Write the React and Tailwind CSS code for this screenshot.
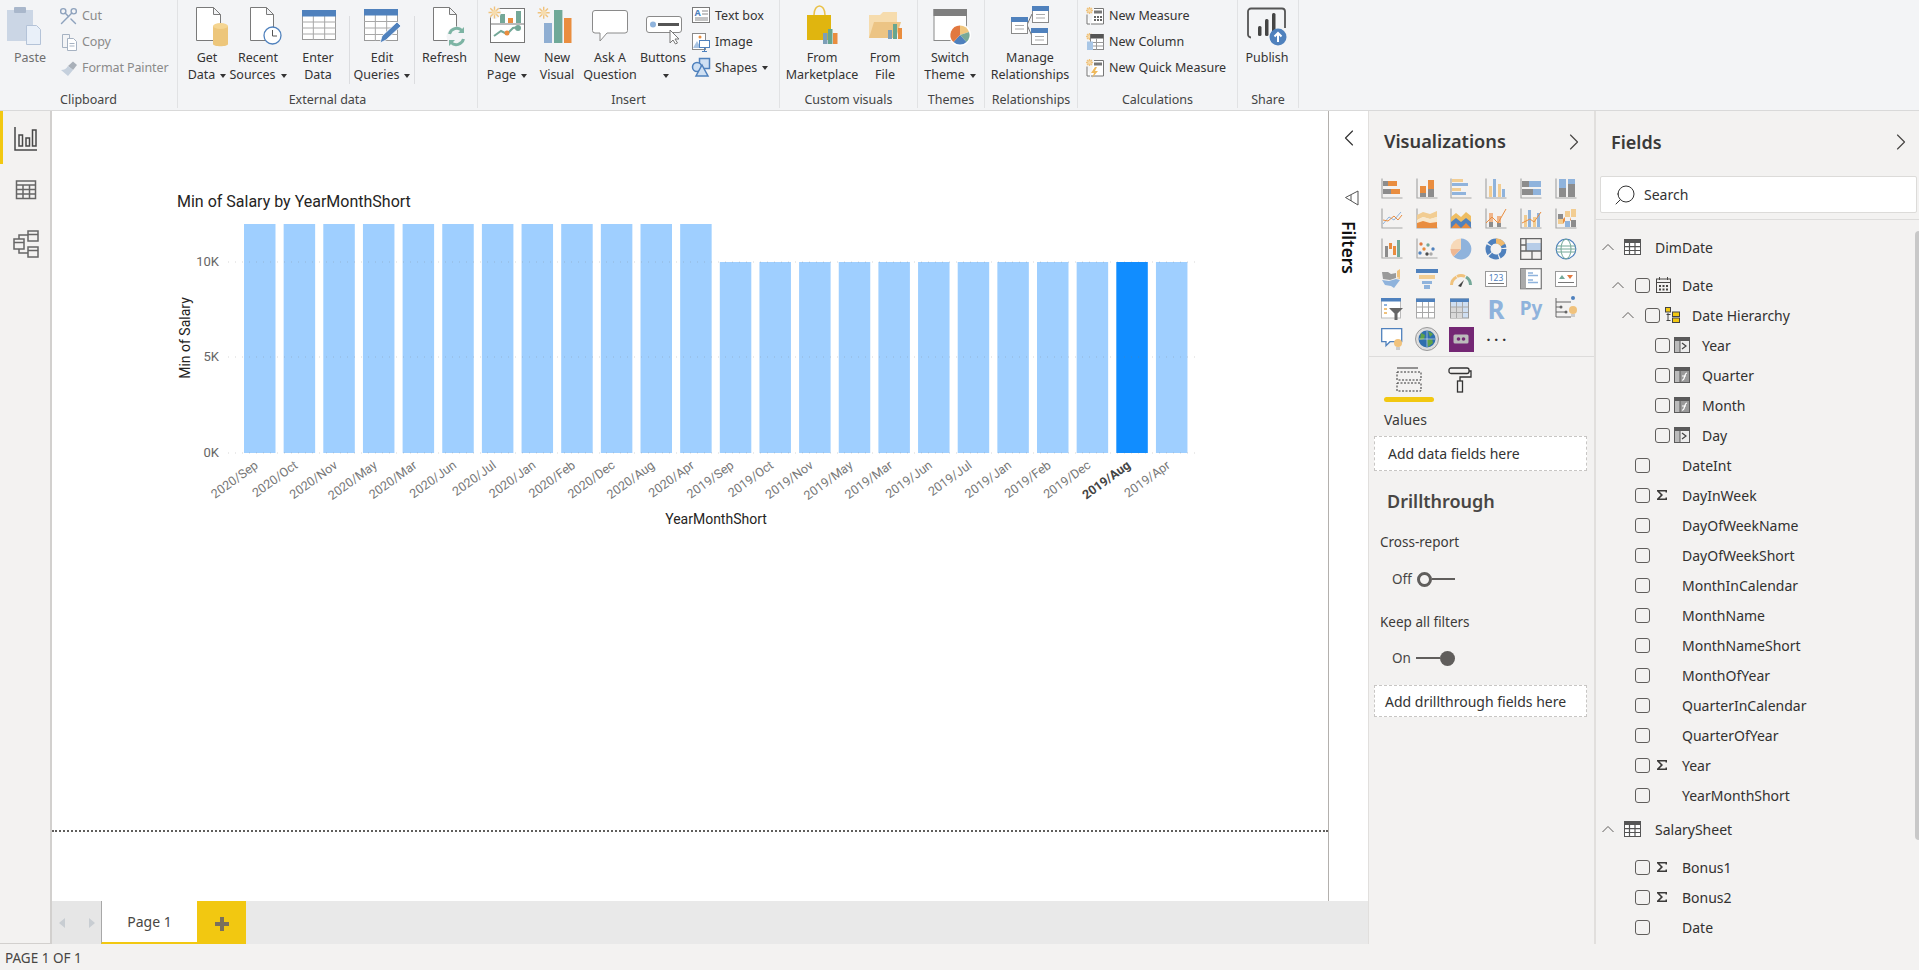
import React from 'react';
import { Scissors, ChevronLeft, ChevronRight, Search } from 'lucide-react';

const UI = "font-['Noto_Sans','Open_Sans',sans-serif]";

const O = '#e98d3f', B = '#8fb3dc', T = '#f2cd92', G = '#8c8c8c', GR = '#74a898', BL = '#4f81bd';

const Sun = ({ x, y, r = 5 }) => (
    <g stroke="#f0c27c" strokeWidth="1.4">
        <path d={`M${x - r} ${y}h${2 * r}M${x} ${y - r}v${2 * r}M${x - r * 0.7} ${y - r * 0.7}l${1.4 * r} ${1.4 * r}M${x - r * 0.7} ${y + r * 0.7}l${1.4 * r} ${-1.4 * r}`} />
        <circle cx={x} cy={y} r={r * 0.45} fill="#f6dcae" stroke="none" />
    </g>
);

const Big = ({ children }) => (
    <svg width="40" height="40" viewBox="0 0 40 40" className="overflow-visible">{children}</svg>
);

const Doc = ({ x = 9, w = 25 }) => (
    <path d={`M${x + .5} 1.5h${w - 8}l7 7v26h${-(w - 1)}zM${x + w - 7.5} 1.5v7h7`} fill="#fff" stroke="#7a7a7a" />
);

const Table = ({ x, y, w, h, head = BL, fill = '#fff' }) => {
    const lines = [];
    for (let i = 1; i < 3; i++) lines.push(`M${x + (w * i) / 3} ${y}v${h}`);
    for (let i = 1; i < 4; i++) lines.push(`M${x} ${y + 6 + ((h - 6) * i) / 4}h${w}`);
    return (
        <g>
            <rect x={x + .5} y={y + .5} width={w - 1} height={h - 1} fill={fill} stroke="#9a9a9a" />
            <path d={lines.join('')} stroke="#a8a8a8" fill="none" />
            <rect x={x} y={y} width={w} height="6.5" fill={head} />
        </g>
    );
};

const PasteIcon = () => (
    <Big>
        <rect x="-3" y="4" width="26" height="31" fill="#cbd6e5" />
        <rect x="4" y="1" width="12" height="6" rx="1" fill="#a9b7cb" />
        <path d="M16.5 19.5h10l4 4v15h-14z" fill="#e9f0f9" stroke="#b4c3d8" />
    </Big>
);
const GetDataIcon = () => (
    <Big>
        <Doc />
        <path d="M26 20v18c0 3 15 3 15 0V20z" fill="#edc67b" />
        <ellipse cx="33.5" cy="20" rx="7.5" ry="3" fill="#f5d591" />
    </Big>
);
const RecentIcon = () => (
    <Big>
        <Doc x={12} w={24} />
        <circle cx="34.5" cy="29.5" r="8.5" fill="#fff" stroke={BL} strokeWidth="1.3" />
        <path d="M34.5 24v6h4.5" fill="none" stroke="#555" />
    </Big>
);
const EditIcon = () => (
    <Big>
        <Table x={2} y={3} w={34} h={32} />
        <path d="M18 37l2-7L35 16l4 4-15 14z" fill={BL} stroke="#fff" strokeWidth=".8" />
    </Big>
);
const RefreshIcon = () => (
    <Big>
        <Doc x={8} w={24} />
        <circle cx="31.5" cy="30.5" r="10" fill="#f3f4f6" />
        <path d="M24.5 28a7.5 7.5 0 0 1 12.5-3.5M38.5 33a7.5 7.5 0 0 1-12.5 3.5" fill="none" stroke="#7db4a4" strokeWidth="3" />
        <path d="M39 21v6h-6zM24 40v-6h6z" fill="#7db4a4" />
    </Big>
);
const NewPageIcon = () => (
    <Big>
        <rect x="3.5" y="2.5" width="34" height="34" fill="#fff" stroke="#777" />
        <path d="M4 18h33" stroke="#777" />
        <rect x="13" y="8" width="5" height="9" fill={GR} />
        <rect x="21" y="12" width="5" height="5" fill={O} />
        <rect x="29" y="5" width="5" height="12" fill={GR} />
        <path d="M7 30l7-5 6 3 6-6 6-1" fill="none" stroke={GR} strokeWidth="2" />
        <circle cx="20" cy="27" r="2.5" fill={O} />
        <circle cx="31" cy="22" r="3" fill={GR} />
        <circle cx="7.5" cy="6.5" r="6.5" fill="#f3f4f6" />
        <Sun x={7.5} y={6.5} r={6} />
    </Big>
);
const NewVisualIcon = () => (
    <Big>
        <Sun x={6.7} y={6.7} r={6} />
        <rect x="7" y="17" width="8" height="20" fill="#8faed2" />
        <rect x="17" y="4" width="8.4" height="33" fill="#6fa998" />
        <rect x="27" y="12" width="7.5" height="25" fill={O} />
    </Big>
);
const AskIcon = () => (
    <Big>
        <path d="M5 4.5h30a2.500 2.500 0 0 1 2.500 2.500v17.500a2.500 2.500 0 0 1-2.500 2.500H17l-7 8v-8H5a2.500 2.500 0 0 1-2.500-2.500V7A2.500 2.500 0 0 1 5 4.500z" fill="#fff" stroke="#8a8a8a" />
    </Big>
);
const ButtonsIcon = () => (
    <Big>
        <rect x="3.500" y="10.500" width="35" height="16" rx="2.500" fill="#fff" stroke="#8a8a8a" />
        <circle cx="10" cy="18.500" r="3" fill="#8fb3dc" />
        <rect x="15" y="17" width="21" height="3" fill="#555" />
        <path d="M27 24v13l3-3 2.500 4 2-1-2.500-4h4z" fill="#fff" stroke="#777" />
    </Big>
);
const MarketIcon = () => (
    <Big>
        <path d="M12 9c0-12 11-12 11 0" fill="none" stroke="#eac24a" strokeWidth="1.500" />
        <path d="M5 9h24v25H5z" fill="#e0b50f" />
        <rect x="21" y="27" width="4.500" height="11" fill="#7d9fb8" />
        <rect x="26" y="23" width="4.500" height="15" fill="#67a68f" />
        <rect x="31" y="27" width="4.500" height="11" fill={O} />
    </Big>
);
const FileIcon = () => (
    <Big>
        <path d="M4 9h11l3-3h14v26H4z" fill="#f6dcae" />
        <path d="M4 32l5-16h27l-5 16z" fill="#ecc484" />
        <rect x="23" y="24" width="4" height="9" fill="#7d9fb8" />
        <rect x="28" y="18" width="4" height="15" fill="#67a68f" />
        <rect x="33" y="22" width="4" height="11" fill={O} />
    </Big>
);
const ThemeIcon = () => (
    <Big>
        <rect x="4" y="3.500" width="32.500" height="31" fill="#fff" stroke="#8a8a8a" />
        <rect x="3.500" y="3" width="33.500" height="7" fill="#7f7f7f" />
        <circle cx="30" cy="29" r="11" fill="#fff" />
        <path d="M30 29V19.500a9.500 9.500 0 0 1 9 6.500z" fill="#f0c67e" />
        <path d="M30 29l9-3a9.500 9.500 0 0 1-2.500 10z" fill="#78a997" />
        <path d="M30 29l6.500 7a9.500 9.500 0 0 1-13 0z" fill={BL} />
        <path d="M30 29l-6.500 7a9.500 9.500 0 0 1 6.500-16.500z" fill="#e2783f" />
    </Big>
);
const MiniTable = ({ x, y }) => (
    <g>
        <rect x={x + .5} y={y + .5} width="16" height="16" fill="#fff" stroke="#8a8a8a" />
        <rect x={x} y={y} width="17" height="5" fill={BL} />
        <path d={`M${x + 4} ${y + 8.500}h9M${x + 4} ${y + 12}h9`} stroke="#aaa" />
    </g>
);
const RelIcon = () => (
    <Big>
        <path d="M17 19l5-11M17 19l5 11" fill="none" stroke="#777" />
        <MiniTable x={22} y={0} />
        <MiniTable x={1} y={11} />
        <MiniTable x={21} y={22} />
    </Big>
);
const PublishIcon = () => (
    <Big>
        <path d="M4 31.500a3 3 0 0 1-3-3V5.500a3 3 0 0 1 3-3h31a3 3 0 0 1 3 3V22" fill="none" stroke="#555" strokeWidth="1.800" />
        <rect x="11" y="20" width="3.500" height="10" rx="1.500" fill="#444" />
        <rect x="18" y="13" width="3.500" height="17" rx="1.500" fill="#444" />
        <rect x="25" y="7" width="3.500" height="23" rx="1.500" fill="#444" />
        <circle cx="31" cy="31" r="8.500" fill={BL} />
        <path d="M31 36v-9M27.500 30.500l3.500-3.500 3.500 3.500" fill="none" stroke="#fff" strokeWidth="2" />
    </Big>
);

const Small = ({ children }) => (
    <svg width="18" height="18" viewBox="0 0 18 18" className="shrink-0 overflow-visible">{children}</svg>
);
const CopyIcon = () => (
    <Small>
        <path d="M2.500 1.500h7v13h-7z" fill="#f3f4f6" stroke="#a6b2c2" />
        <path d="M7.500 5.500h6l3 3v9h-9z" fill="#fff" stroke="#a6b2c2" />
        <path d="M9.500 10.500h5M9.500 13h5" stroke="#a6b2c2" />
    </Small>
);
const PainterIcon = () => (
    <Small>
        <path d="M8 7l5-4.500 4 3.500-4 5z" fill="#a9b0b9" />
        <path d="M8 7l5 4-5 6-7-6c3 0 5-1 7-4z" fill="#c5d0dd" />
    </Small>
);
const TextBoxIcon = () => (
    <Small>
        <rect x=".5" y=".5" width="17" height="15" fill="#fff" stroke="#7a7a7a" />
        <text x="2.500" y="9" fontSize="9" fontWeight="700" fill={BL} fontFamily="Noto Sans">A</text>
        <path d="M10 4h6M10 7h6M3 11h13M3 13h13" stroke="#8a8a8a" />
    </Small>
);
const ImageIcon = () => (
    <Small>
        <rect x=".5" y=".5" width="13" height="16" fill="#fff" stroke="#8a8a8a" />
        <circle cx="8" cy="4" r="1.500" fill={O} />
        <path d="M1 15l4-7 4 7z" fill="#a8c3e2" />
        <rect x="7.500" y="7.500" width="10" height="7" fill="#fff" stroke={BL} />
        <path d="M12.500 15v3M10 18.500h5" stroke={BL} />
    </Small>
);
const ShapesIcon = () => (
    <Small>
        <rect x="7.500" y="-.500" width="10" height="10" fill="#cfe0f3" stroke={BL} strokeWidth="1.500" />
        <circle cx="5" cy="8" r="4.500" fill="#cfe0f3" stroke={BL} strokeWidth="1.500" />
        <path d="M10 6l6 11H4z" fill="#cfe0f3" stroke={BL} strokeWidth="1.500" />
    </Small>
);
const CalcIcon = ({ kind }) => (
    <Small>
        <Sun x={3.500} y={3.500} r={3.500} />
        {kind === 'column' ? (
            <g>
                <rect x="4.500" y="1.500" width="13" height="15" fill="#fff" stroke="#888" />
                <rect x="4.500" y="1" width="13" height="4.500" fill="#555" />
                <path d="M10.500 5v12M4.500 9.500h13M4.500 13h13" stroke="#999" />
                <rect x="1" y="8.500" width="6" height="8.500" fill="#a8c6e6" />
            </g>
        ) : (
            <g>
                <path d="M1 7.500V17h3M8 1.500h9.500V17H5" fill="#fff" stroke="#777" />
                <rect x="8" y="3.500" width="8" height="3" fill="#777" />
                {kind === 'measure'
                    ? <path d="M8 9h2v2H8zM11 9h2v2h-2zM14 9h2v2h-2zM8 12h2v2H8zM11 12h2v2h-2zM14 12h2v2h-2z" fill="#666" />
                    : <path d="M9 8l-4 6h3l-2 5 6-7H9l2-4z" fill="#efb95c" />}
            </g>
        )}
    </Small>
);

const Caret = () => (
    <span className="inline-block ml-[5px] align-middle border-x-[3.5px] border-t-[4px] border-x-transparent border-t-[#333]" />
);

const Btn = ({ className, icon, lines, caret, dim }) => (
    <div className={`flex flex-col items-center pt-[6px] shrink-0 text-[12.5px] leading-[17px] ${dim ? 'text-[#6f6f6f]' : 'text-[#333]'} ${className}`}>
        <div className="h-[40px] mb-[3px]">{icon}</div>
        {lines.map((l, i) => (
            <div key={i} className="whitespace-nowrap h-[17px]">
                {l}
                {caret && i === lines.length - 1 && <Caret />}
            </div>
        ))}
    </div>
);

const SmallBtn = ({ icon, label, caret, dim }) => (
    <div className={`flex items-center h-[26px] whitespace-nowrap text-[12.5px] ${dim ? 'text-[#8a8a8a] tracking-[-0.1px]' : 'text-[#333]'}`}>
        <div className={`shrink-0 ${dim ? 'w-[22px]' : 'w-[23px]'}`}>{icon}</div>
        <span>{label}</span>
        {caret && <Caret />}
    </div>
);

const Group = ({ label, className, children }) => (
    <div className={`h-[108px] flex flex-col border-r border-[#e1e2e4] shrink-0 ${className}`}>
        <div className="flex flex-1">{children}</div>
        <div className="h-[17px] text-center text-[12.5px] leading-[17px] text-[#444]">{label}</div>
    </div>
);

const Sep = () => <div className="w-px h-[68px] mt-[16px] bg-[#dcdde0] shrink-0" />;

const Ribbon = () => (
    <div className="h-[111px] shrink-0 flex bg-[#f3f4f6] border-b border-[#d9d9d9]">
        <Group label="Clipboard" className="w-[178px]">
            <Btn dim className="w-[60px]" icon={<PasteIcon />} lines={['Paste']} />
            <div className="pt-[3px]">
                <SmallBtn dim icon={<Scissors size={21} strokeWidth={1.6} color="#8ea2bd" className="-ml-[2px] -scale-x-100 -rotate-90" />} label="Cut" />
                <SmallBtn dim icon={<CopyIcon />} label="Copy" />
                <SmallBtn dim icon={<PainterIcon />} label="Format Painter" />
            </div>
        </Group>
        <Group label="External data" className="w-[300px]">
            <Btn className="w-[50px] ml-[4px]" icon={<GetDataIcon />} lines={['Get', 'Data']} caret />
            <Btn className="w-[52px]" icon={<RecentIcon />} lines={['Recent', 'Sources']} caret />
            <Btn className="w-[62px] ml-[3px]" icon={<Big><Table x={4} y={4} w={34} h={30} /></Big>} lines={['Enter', 'Data']} />
            <Sep />
            <Btn className="w-[64px]" icon={<EditIcon />} lines={['Edit', 'Queries']} caret />
            <Sep />
            <Btn className="w-[55px] ml-[2px]" icon={<RefreshIcon />} lines={['Refresh']} />
        </Group>
        <Group label="Insert" className="w-[302px]">
            <Btn className="w-[50px] ml-[4px]" icon={<NewPageIcon />} lines={['New', 'Page']} caret />
            <Btn className="w-[50px]" icon={<NewVisualIcon />} lines={['New', 'Visual']} />
            <Btn className="w-[56px]" icon={<AskIcon />} lines={['Ask A', 'Question']} />
            <Btn className="w-[50px]" icon={<ButtonsIcon />} lines={['Buttons', '']} caret />
            <div className="pt-[3px] ml-[4px]">
                <SmallBtn icon={<TextBoxIcon />} label="Text box" />
                <SmallBtn icon={<ImageIcon />} label="Image" />
                <SmallBtn icon={<ShapesIcon />} label="Shapes" caret />
            </div>
        </Group>
        <Group label="Custom visuals" className="w-[138px]">
            <Btn className="w-[80px] ml-[2px]" icon={<MarketIcon />} lines={['From', 'Marketplace']} />
            <Btn className="w-[46px]" icon={<FileIcon />} lines={['From', 'File']} />
        </Group>
        <Group label="Themes" className="w-[67px]">
            <Btn className="w-[64px]" icon={<ThemeIcon />} lines={['Switch', 'Theme']} caret />
        </Group>
        <Group label="Relationships" className="w-[93px]">
            <Btn className="w-[90px]" icon={<RelIcon />} lines={['Manage', 'Relationships']} />
        </Group>
        <Group label="Calculations" className="w-[160px]">
            <div className="pt-[3px] ml-[8px]">
                <SmallBtn icon={<CalcIcon kind="measure" />} label="New Measure" />
                <SmallBtn icon={<CalcIcon kind="column" />} label="New Column" />
                <SmallBtn icon={<CalcIcon kind="quick" />} label="New Quick Measure" />
            </div>
        </Group>
        <Group label="Share" className="w-[61px]">
            <Btn className="w-[58px]" icon={<PublishIcon />} lines={['Publish']} />
        </Group>
    </div>
);

const LeftRail = () => (
    <div className="w-[52px] shrink-0 bg-[#f3f2f1] border-r-2 border-b border-[#d2d0ce] flex flex-col items-center pl-[2px] relative">
        <div className="absolute left-0 top-0 w-[3px] h-[53px] bg-[#f2c811]" />
        <svg width="26" height="26" viewBox="0 0 26 26" className="mt-[15px]" fill="none" stroke="#484848" strokeWidth="1.500">
            <path d="M2 1v23h22" />
            <rect x="6" y="9" width="3.500" height="11" />
            <rect x="13" y="12" width="3.500" height="8" />
            <rect x="19.500" y="4" width="3.500" height="16" />
        </svg>
        <svg width="22" height="22" viewBox="0 0 22 22" className="mt-[27px]" fill="none" stroke="#666" strokeWidth="1.500">
            <rect x="1.500" y="2" width="19" height="17.500" />
            <path d="M1.500 6h19M1.500 10.500h19M1.500 15h19M8 6v13.500M14.500 6v13.500" />
        </svg>
        <svg width="26" height="28" viewBox="0 0 26 28" className="mt-[29px]" fill="none" stroke="#666" strokeWidth="1.500">
            <rect x="1" y="9" width="10" height="10" />
            <rect x="15" y="1" width="10" height="10" />
            <rect x="15" y="17" width="10" height="10" />
            <path d="M1 12.500h10M15 4.500h10M15 20.500h10M6 9V5h9M6 19v4h9" />
        </svg>
    </div>
);

const months = ['Sep', 'Oct', 'Nov', 'May', 'Mar', 'Jun', 'Jul', 'Jan', 'Feb', 'Dec', 'Aug', 'Apr'];
const bars = [
    ...months.map((m) => ({ label: `2020/${m}`, top: 224 })),
    ...months.map((m) => ({ label: `2019/${m}`, top: 262 })),
];

const Chart = () => (
    <svg width="1040" height="350" viewBox="170 190 1040 350" className="ml-[118px] mt-[79px] block font-['Roboto',sans-serif]">
        <text x="177" y="207" fontSize="16" fill="#252423">Min of Salary by YearMonthShort</text>
        {bars.map((b, i) => {
            const x = 244 + i * 39.65;
            const selected = b.label === '2019/Aug';
            return (
                <g key={b.label}>
                    <rect x={x} y={b.top} width="31.5" height={453 - b.top} fill={selected ? '#118dff' : '#9fcfff'} />
                    <text
                        x={x + 15}
                        y={467}
                        fontSize="12.5"
                        textAnchor="end"
                        fontWeight={selected ? 700 : 400}
                        fill={selected ? '#444' : '#777'}
                        transform={`rotate(-36 ${x + 15} 467)`}
                    >
                        {b.label}
                    </text>
                </g>
            );
        })}
        {[262, 357, 453].map((y) => (
            <path key={y} d={`M228 ${y}H1198`} stroke="#777" strokeOpacity=".3" strokeDasharray="1 6" />
        ))}
        <text x="219" y="266" fontSize="13" textAnchor="end" fill="#666">10K</text>
        <text x="219" y="361" fontSize="13" textAnchor="end" fill="#666">5K</text>
        <text x="219" y="457" fontSize="13" textAnchor="end" fill="#666">0K</text>
        <text x="190" y="338" fontSize="14" textAnchor="middle" fill="#252423" transform="rotate(-90 190 338)">Min of Salary</text>
        <text x="716" y="524" fontSize="14" textAnchor="middle" fill="#252423">YearMonthShort</text>
    </svg>
);

const FiltersPane = () => (
    <div className="w-[39px] shrink-0 bg-white flex flex-col items-center">
        <ChevronLeft size={28} strokeWidth={1} color="#333" className="mt-[13px]" />
        <svg width="14" height="16" viewBox="0 0 14 16" className="mt-[38px] ml-[6px]" fill="none" stroke="#555">
            <path d="M.5 7.500L13 1v14z" />
            <path d="M6 5v6" />
        </svg>
        <div className="[writing-mode:vertical-rl] text-[17.5px] font-semibold text-[#111] mt-[15px] leading-[20px]">Filters</div>
    </div>
);

const TabBar = () => (
    <div className="h-[43px] shrink-0 bg-[#e9e9e9] flex">
        <div className="w-[49px] bg-[#e6e6e6] flex items-center">
            <span className="ml-[7px] border-y-[5px] border-r-[6px] border-y-transparent border-r-[#c8cdd2]" />
            <span className="ml-[24px] border-y-[5px] border-l-[6px] border-y-transparent border-l-[#c8cdd2]" />
        </div>
        <div className="w-[96px] bg-white border-l border-[#a8a8a8] border-b-2 border-b-[#f2c811] flex items-center justify-center text-[14px] text-[#484644]">Page 1</div>
        <div className="w-[49px] bg-[#f2c811] flex items-center justify-center pt-[3px]">
            <svg width="16" height="16" viewBox="0 0 16 16"><path d="M6 1h4v5h5v4h-5v5H6v-5H1V6h5z" fill="#7a705c" /></svg>
        </div>
    </div>
);

const ViewIcon = ({ r = [], ax = true, children }) => (
    <svg width="22" height="22" viewBox="0 0 22 22" className="overflow-visible">
        {ax && <path d="M1 .500v19.500h20.500" fill="none" stroke="#a8a8a8" strokeWidth="1.200" />}
        {r.map(([x, y, w, h, c], i) => <rect key={i} x={x} y={y} width={w} height={h} fill={c} />)}
        {children}
    </svg>
);

const grid = [
    <ViewIcon r={[[2, 3, 5, 5, G], [7, 3, 9, 5, O], [2, 11, 8, 5, G], [10, 11, 9, 5, O]]} />,
    <ViewIcon r={[[4, 8, 6, 7, O], [4, 15, 6, 4, G], [12, 2, 6, 9, O], [12, 11, 6, 8, G]]} />,
    <ViewIcon r={[[2, 1, 11, 3, T], [2, 5, 16, 3, B], [2, 10, 9, 3, T], [2, 14, 14, 3, B]]} />,
    <ViewIcon r={[[4, 8, 3, 11, T], [8, 1, 3, 18, B], [13, 6, 3, 13, T], [17, 11, 3, 8, B]]} />,
    <ViewIcon r={[[2, 3, 7, 6, G], [9, 3, 12, 6, B], [2, 11, 11, 6, G], [13, 11, 8, 6, B]]} />,
    <ViewIcon r={[[4, 1, 7, 9, B], [4, 10, 7, 9, G], [13, 1, 7, 5, B], [13, 6, 7, 13, G]]} />,

    <ViewIcon>
        <path d="M2 16l6-7 5 3 7-8" fill="none" stroke={B} />
        <path d="M2 12l5 1 6-5 4 4 4-5" fill="none" stroke={O} />
    </ViewIcon>,
    <ViewIcon>
        <path d="M1 7l6-3 7 2 7-3v6l-7 2-7-2-6 3z" fill={T} />
        <path d="M1 12l6-3 7 2 7-2v5l-7 1-6-1-7 3z" fill="#f8e8cd" />
        <path d="M1 15l6-2 7 2 7-1v6H1z" fill={O} />
    </ViewIcon>,
    <ViewIcon>
        <path d="M1 20V9l5-4 5 4 5-5 5 4v12z" fill="#eebd62" />
        <path d="M1 20v-6l5-4 5 4 5-4 5 4v6z" fill={BL} />
        <path d="M1 20l5-5 5 5 5-5 5 5z" fill={O} />
    </ViewIcon>,
    <ViewIcon r={[[4, 5, 4, 9, '#f0b58a'], [4, 14, 4, 5, G], [12, 8, 4, 7, '#f0b58a'], [12, 15, 4, 4, G]]}>
        <path d="M1 15l6-6 6 6 8-14" fill="none" stroke={O} />
    </ViewIcon>,
    <ViewIcon r={[[4, 7, 3, 12, T], [8, 2, 3, 17, B], [13, 9, 3, 10, T], [17, 5, 3, 14, B]]}>
        <path d="M2 15l8-4 4 3 7-10" fill="none" stroke={O} />
    </ViewIcon>,
    <ViewIcon r={[[3, 6, 5, 5, G], [3, 11, 5, 5, T], [10, 3, 5, 6, T], [10, 13, 5, 6, B], [16, 1, 5, 8, T], [16, 12, 5, 7, G]]}>
        <path d="M8 11l2-2v4l-2 3zM15 9l1 3v0l-1 1z" fill={O} />
    </ViewIcon>,

    <ViewIcon r={[[4, 8, 3, 11, G], [8, 5, 3, 6, O], [12, 8, 3, 9, O], [16, 2, 3, 17, GR]]} />,
    <ViewIcon>
        {[[4, 15, BL], [8, 11, O], [11, 16, '#4d4d4d'], [12, 7, GR], [17, 11, BL], [15, 16, '#aaa'], [5, 6, '#e2783f']].map(([x, y, c], i) => <circle key={i} cx={x} cy={y} r="1.700" fill={c} />)}
    </ViewIcon>,
    <ViewIcon ax={false}>
        <path d="M11 11V.500a10.500 10.500 0 1 1-7.500 18z" fill={B} />
        <path d="M11 11l-7.500 7.500a10.500 10.500 0 0 1-3-7.500z" fill="#efb893" />
        <path d="M.500 11A10.500 10.500 0 0 1 11 .500V11z" fill="#f7d9b8" />
    </ViewIcon>,
    <ViewIcon ax={false}>
        <circle cx="11" cy="11" r="8" fill="none" stroke={BL} strokeWidth="5" strokeDasharray="8.800 1.200" />
        <path d="M11 3a8 8 0 0 1 7 4" fill="none" stroke="#f0b96c" strokeWidth="5" />
    </ViewIcon>,
    <ViewIcon ax={false} r={[[6, 5, 15, 8, '#b7cde8']]}>
        <path d="M.700.700h20.600v20.600H.700zM6 .700v12.500M.700 13h20.600M12 13v8M.700 7h5" fill="none" stroke="#666" strokeWidth="1.300" />
    </ViewIcon>,
    <ViewIcon ax={false}>
        <circle cx="11" cy="11" r="9.800" fill="#fff" stroke={BL} strokeWidth="1.200" />
        <ellipse cx="11" cy="11" rx="5" ry="9.800" fill="none" stroke={GR} />
        <path d="M1.500 8h19M1.500 14h19M1 11h20" stroke={GR} />
    </ViewIcon>,

    <ViewIcon ax={false}>
        <path d="M1 4h6l3 2 5-1v5l-6 2-7-1z" fill="#9a9a9a" />
        <path d="M1 12l7 1 7-2 4 1-3 4-3 4-3-2-6-1z" fill={B} />
        <path d="M16 3l3-2v8h-3zM15 10l4-1v2z" fill="#f0c27c" />
    </ViewIcon>,
    <ViewIcon ax={false} r={[[0, 1, 22, 4, BL], [3, 7, 16, 4, T], [6, 13, 10, 3, B], [8, 17, 6, 4, B]]} />,
    <ViewIcon ax={false}>
        <path d="M1.500 17a9.500 9.500 0 0 1 5-8" fill="none" stroke="#f0c27c" strokeWidth="3" />
        <path d="M7 8.500a9.500 9.500 0 0 1 8 0" fill="none" stroke="#f0c27c" strokeWidth="3" />
        <path d="M16 9a9.500 9.500 0 0 1 4.500 8" fill="none" stroke={GR} strokeWidth="3" />
        <path d="M8 18l6-6-3 7z" fill="#444" />
    </ViewIcon>,
    <ViewIcon ax={false}>
        <rect x=".500" y="3.500" width="21" height="15" fill="#fff" stroke="#999" />
        <text x="11" y="12.500" textAnchor="middle" fontSize="8.500" fill={BL} fontFamily="Noto Sans">123</text>
        <path d="M3 15.500h16" stroke="#777" />
    </ViewIcon>,
    <ViewIcon ax={false}>
        <rect x=".700" y=".700" width="20.600" height="20" fill="#fff" stroke="#7f7f7f" strokeWidth="1.300" />
        <rect x="1" y="1" width="5" height="19.500" fill="#aaa" />
        <path d="M8 5h5M8 7.500h10M8 12h5M8 14.500h10" stroke={B} strokeWidth="1.400" />
    </ViewIcon>,
    <ViewIcon ax={false}>
        <rect x=".500" y="3.500" width="21" height="15" fill="#fff" stroke="#999" />
        <path d="M4 11l3-4 3 4z" fill={GR} />
        <path d="M12 7h6l-3 4z" fill="#e2783f" />
        <path d="M3 14.500h16" stroke="#777" />
    </ViewIcon>,

    <ViewIcon ax={false}>
        <rect x=".500" y="1" width="19" height="19" fill="#fff" stroke="#bbb" />
        <rect x="0" y="0" width="20" height="3.500" fill={BL} />
        <path d="M3 6h3v2H3z" fill={B} />
        <path d="M3 10h3v2H3zM3 14h3v2H3z" fill="#f0c27c" />
        <path d="M8 10h14l-5.500 5.500V22h-3v-6.500z" fill="#666" />
    </ViewIcon>,
    <ViewIcon ax={false}>
        <rect x=".500" y="1" width="18" height="19" fill="#fff" stroke="#a8a8a8" />
        <rect x="0" y=".500" width="19" height="3.500" fill={BL} />
        <path d="M6.500 4v16M12.500 4v16M1 9h17M1 14.500h17" stroke="#a8a8a8" />
    </ViewIcon>,
    <ViewIcon ax={false}>
        <rect x=".500" y="1" width="18" height="19" fill="#cfdff2" stroke="#999" />
        <rect x="1" y="9" width="11.500" height="11" fill="#d8d8d8" />
        <rect x="0" y=".500" width="19" height="3.500" fill={BL} />
        <path d="M6.500 4v16M12.500 4v16M1 9h17M1 14.500h17" stroke="#a8a8a8" />
    </ViewIcon>,
    <ViewIcon ax={false}>
        <text x="11" y="21" textAnchor="middle" fontSize="26" fontWeight="700" fill="#8fb3dc" fontFamily="Noto Sans">R</text>
    </ViewIcon>,
    <ViewIcon ax={false}>
        <text x="11" y="17" textAnchor="middle" fontSize="19" fontWeight="700" fill="#8fb3dc" fontFamily="Noto Sans">Py</text>
    </ViewIcon>,
    <ViewIcon ax={false}>
        <path d="M1 0v19h15M1 4h15M1 9h5M1 14h10" fill="none" stroke="#666" />
        <circle cx="6" cy="9" r="1.500" fill="#666" />
        <circle cx="11" cy="14" r="1.500" fill="#666" />
        <circle cx="18" cy="0" r="2" fill={BL} />
        <circle cx="18" cy="12" r="4" fill="#f0c27c" />
        <rect x="16" y="16" width="4" height="3" fill="#ccc" />
    </ViewIcon>,

    <ViewIcon ax={false}>
        <path d="M.700.700h20v13H9l-4 4v-4H.700z" fill="#fff" stroke={BL} strokeWidth="1.300" />
        <circle cx="17" cy="15" r="4" fill="#f0c27c" />
        <rect x="15" y="19" width="4" height="3" fill="#ccc" />
    </ViewIcon>,
    <ViewIcon ax={false}>
        <circle cx="11" cy="11" r="11.500" fill="#ddd" stroke="#999" />
        <circle cx="11" cy="11" r="8.500" fill="#2f6fae" />
        <path d="M5 5l4 2-1 4-4 1zM12 3l5 3-3 3zM11 12l5-1 1 4-5 4z" fill="#5fa24a" />
        <path d="M3 11h16M11 3v16" stroke="#fff" strokeWidth=".5" />
    </ViewIcon>,
    <div className="w-[25px] h-[25px] bg-[#742774] flex items-center justify-center">
        <svg width="16" height="10" viewBox="0 0 16 10">
            <rect x=".500" y=".500" width="15" height="9" rx="1.500" fill="#bbb" />
            <circle cx="5.500" cy="5" r="1.800" fill="#742774" />
            <circle cx="10.500" cy="5" r="1.800" fill="#742774" />
        </svg>
    </div>,
    <div className="text-[#333] font-bold text-[14px] leading-[8px] tracking-[4px] pl-[4px] pt-[1px]">···</div>,
];

const VizPane = () => (
    <div className="w-[227px] shrink-0 bg-[#f3f2f1] border-l border-[#e1dfdd] border-r border-r-[#e1dfdd] relative">
        <div className="h-[40px] mt-[11px] pl-[15px] pr-[6px] flex items-center justify-between">
            <span className="text-[18.2px] font-semibold text-[#3b3a39]">Visualizations</span>
            <ChevronRight size={28} strokeWidth={1} color="#484644" />
        </div>
        <div className="mt-[12px] pl-[5.500px] grid grid-cols-[repeat(6,34.8px)] auto-rows-[30px] items-center justify-items-center">
            {grid.map((g, i) => <React.Fragment key={i}>{g}</React.Fragment>)}
        </div>
        <div className="mt-[2px] border-t border-[#dddcdb] pl-[15px]">
            <div className="flex mt-[10px]">
                <div className="w-[50px] flex flex-col items-center">
                    <svg width="26" height="26" viewBox="0 0 26 26" fill="none" stroke="#333">
                        <path d="M1 1h21" />
                        <path d="M1 5h24v8H1zM1 16h24v8H1z" strokeDasharray="2 1.500" />
                    </svg>
                    <div className="w-[50px] h-[5px] mt-[4px] rounded-full bg-[#f2c811]" />
                </div>
                <svg width="24" height="26" viewBox="0 0 24 26" className="ml-[14px]" fill="none" stroke="#333" strokeWidth="1.300">
                    <rect x="1" y="1" width="20" height="5.500" rx="2" />
                    <path d="M21 4h2v6H12v4" />
                    <rect x="9.500" y="14" width="5" height="11" />
                </svg>
            </div>
            <div className="mt-[8px] h-[20px] text-[14px] leading-[20px] text-[#3b3a39]">Values</div>
        </div>
        <div className="ml-[5px] mr-[7px] mt-[6px] h-[35px] border border-dashed border-[#c8c6c4] bg-white pl-[13px] flex items-center text-[14px] text-[#333]">Add data fields here</div>
        <div className="mt-[16px] ml-[18px] h-[28px] flex items-center text-[18px] font-semibold text-[#484644]">Drillthrough</div>
        <div className="mt-[17px] ml-[11px] h-[20px] text-[13.500px] leading-[20px] text-[#3b3a39]">Cross-report</div>
        <div className="mt-[17px] ml-[23px] h-[20px] flex items-center text-[13.500px] text-[#484644]">
            <span className="w-[25px]">Off</span>
            <span className="w-[15px] h-[15px] rounded-full border-[3px] border-[#605e5c]" />
            <span className="w-[23px] h-[2px] bg-[#605e5c]" />
        </div>
        <div className="mt-[23px] ml-[11px] h-[20px] text-[13.500px] leading-[20px] text-[#3b3a39]">Keep all filters</div>
        <div className="mt-[16px] ml-[23px] h-[20px] flex items-center text-[13.500px] text-[#484644]">
            <span className="w-[24px]">On</span>
            <span className="w-[24px] h-[2px] bg-[#605e5c]" />
            <span className="w-[15px] h-[15px] rounded-full bg-[#605e5c]" />
        </div>
        <div className="ml-[5px] mr-[7px] mt-[17px] h-[32px] border border-dashed border-[#c8c6c4] bg-white pl-[10px] flex items-center text-[14px] text-[#333] whitespace-nowrap">Add drillthrough fields here</div>
    </div>
);

const Check = ({ className = '' }) => <span className={`block w-[15px] h-[15px] shrink-0 rounded-[3px] border border-[#605e5c] ${className}`} />;

const Up = () => (
    <svg width="12" height="8" viewBox="0 0 12 8" className="shrink-0" fill="none" stroke="#605e5c"><path d="M.500 7L6 1.500 11.500 7" /></svg>
);

const Sigma = () => (
    <svg width="12" height="12" viewBox="0 0 12 12" className="ml-[6px]"><path d="M1 1h10v2.500H9.500V2.500H3.500L7 6l-3.500 3.500h6V8.500H11V11H1V9.800L4.800 6 1 2.200z" fill="#3b3a39" /></svg>
);

const TableIcon = () => (
    <svg width="17" height="16" viewBox="0 0 17 16" className="ml-[10px] shrink-0" fill="none">
        <rect x=".500" y=".500" width="16" height="15" fill="#fff" stroke="#555" />
        <rect x="0" y="0" width="17" height="4" fill="#555" />
        <path d="M5.500 4v11M11 4v11M1 7.700h15M1 11.500h15" stroke="#555" strokeWidth="1.200" />
    </svg>
);

const CalendarIcon = () => (
    <svg width="15" height="16" viewBox="0 0 15 16" className="ml-[6px] shrink-0" fill="none" stroke="#484644">
        <rect x=".500" y="2" width="14" height="13.500" />
        <path d="M3.500 0v3M11.500 0v3M1 5.500h13" />
        <path d="M3 8h2v2H3zM6.500 8h2v2h-2zM10 8h2v2h-2zM3 11.500h2v2H3zM6.500 11.500h2v2h-2zM10 11.500h2v2h-2z" fill="#484644" stroke="none" />
    </svg>
);

const HierIcon = () => (
    <svg width="15" height="16" viewBox="0 0 15 16" className="ml-[5px] shrink-0">
        <rect x=".500" y=".500" width="5" height="4.500" fill="#f2c811" stroke="#444" />
        <rect x="7.500" y="5" width="7" height="4.500" fill="#f2c811" stroke="#444" />
        <rect x="7.500" y="11" width="7" height="4.500" fill="#f2c811" stroke="#444" />
        <path d="M3 6v8M1.500 7.500h4M1.500 13.500h4" stroke="#444" />
    </svg>
);

const LevelIcon = ({ fx }) => (
    <svg width="16" height="16" viewBox="0 0 16 16" className="ml-[4px] shrink-0">
        <rect x="0" y="0" width="16" height="16" fill="#5a5a5a" />
        <rect x="1" y="4" width="4.500" height="11" fill="#bbb" />
        <rect x="6.500" y="4" width="8.500" height="11" fill={fx ? '#999' : '#eee'} />
        <path d={fx ? 'M8 13c3 1 2-7 5-7M8 9h4' : 'M8 6l4 3-4 3'} fill="none" stroke={fx ? '#fff' : '#444'} strokeWidth="1.200" />
    </svg>
);

const Leaf = ({ name, sum }) => (
    <div className="h-[30px] flex items-center pl-[39px]">
        <Check />
        <span className="w-[32px] shrink-0">{sum && <Sigma />}</span>
        <span>{name}</span>
    </div>
);

const Level = ({ name, fx }) => (
    <div className="h-[30px] flex items-center pl-[59px]">
        <Check />
        <LevelIcon fx={fx} />
        <span className="ml-[12px]">{name}</span>
    </div>
);

const TableRow = ({ name, className = '' }) => (
    <div className={`h-[30px] flex items-center pl-[6px] ${className}`}>
        <Up />
        <TableIcon />
        <span className="ml-[14px]">{name}</span>
    </div>
);

const FieldsPane = () => (
    <div className="flex-1 bg-[#f3f2f1] relative overflow-hidden border-l border-[#e1dfdd]">
        <div className="h-[40px] mt-[11px] pl-[15px] pr-[4px] flex items-center justify-between">
            <span className="text-[18px] font-semibold text-[#3b3a39]">Fields</span>
            <ChevronRight size={28} strokeWidth={1} color="#484644" />
        </div>
        <div className="ml-[4px] mr-[2px] mt-[14px] h-[37px] bg-white border border-[#dcdbd9] rounded-[2px] flex items-center pl-[12px] text-[14px] text-[#333]">
            <Search size={24} strokeWidth={1} color="#333" className="-scale-x-100" />
            <span className="ml-[7px]">Search</span>
        </div>
        <div className="mt-[6px] border-t border-[#dddcdb]" />
        <div className="absolute right-0 top-[120px] w-[4px] h-[609px] rounded-l-sm bg-[#c8c8c8]" />
        <div className="mt-[12px] text-[14px] text-[#323130] whitespace-nowrap">
            <TableRow name="DimDate" />
            <div className="h-[30px] flex items-center pl-[16px] mt-[8px]">
                <Up />
                <Check className="ml-[11px]" />
                <CalendarIcon />
                <span className="ml-[11px]">Date</span>
            </div>
            <div className="h-[30px] flex items-center pl-[26px]">
                <Up />
                <Check className="ml-[11px]" />
                <HierIcon />
                <span className="ml-[12px]">Date Hierarchy</span>
            </div>
            <Level name="Year" />
            <Level name="Quarter" fx />
            <Level name="Month" fx />
            <Level name="Day" />
            <Leaf name="DateInt" />
            <Leaf name="DayInWeek" sum />
            <Leaf name="DayOfWeekName" />
            <Leaf name="DayOfWeekShort" />
            <Leaf name="MonthInCalendar" />
            <Leaf name="MonthName" />
            <Leaf name="MonthNameShort" />
            <Leaf name="MonthOfYear" />
            <Leaf name="QuarterInCalendar" />
            <Leaf name="QuarterOfYear" />
            <Leaf name="Year" sum />
            <Leaf name="YearMonthShort" />
            <TableRow name="SalarySheet" className="mt-[4px]" />
            <div className="mt-[8px]">
                <Leaf name="Bonus1" sum />
                <Leaf name="Bonus2" sum />
                <Leaf name="Date" />
            </div>
        </div>
    </div>
);

export default function App() {
    return (
        <div className={`w-screen h-screen overflow-hidden flex flex-col bg-white ${UI}`}>
            <Ribbon />
            <div className="flex flex-1 min-h-0">
                <LeftRail />
                <div className="w-[1316px] shrink-0 flex flex-col">
                    <div className="flex flex-1 min-h-0">
                        <div className="flex-1 bg-white border-r border-[#b3b0ad]">
                            <Chart />
                            <div className="mt-[290px] border-t-2 border-dotted border-[#605e5c]" />
                        </div>
                        <FiltersPane />
                    </div>
                    <TabBar />
                </div>
                <VizPane />
                <FieldsPane />
            </div>
            <div className="h-[26px] shrink-0 bg-[#f3f2f1] pl-[5px] pt-[3px] flex items-center text-[13.5px] text-[#484644]">PAGE 1 OF 1</div>
        </div>
    );
}
